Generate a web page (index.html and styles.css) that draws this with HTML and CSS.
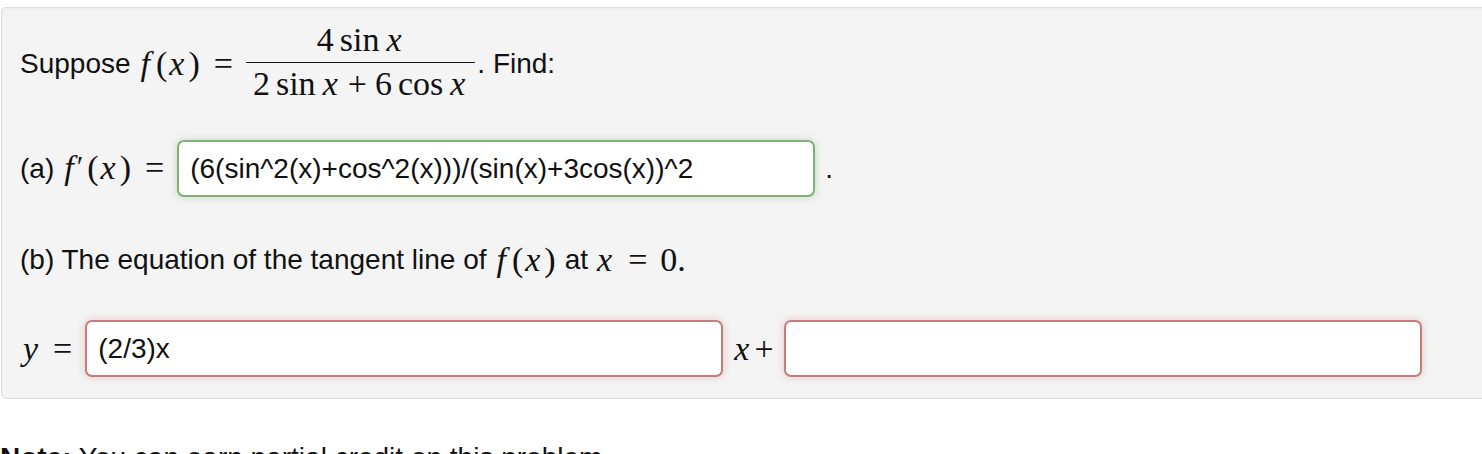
FILE: index.html
```html
<!DOCTYPE html>
<html>
<head>
<meta charset="utf-8">
<link rel="stylesheet" href="styles.css">
</head>
<body>
<div class="panel">
  <div class="row r1">
    <span class="text">Suppose</span>
    <span class="math sp-l"><i class="mf">f</i><span class="p">(</span><i class="mx">x</i><span class="p">)</span><span class="rel">=</span></span>
    <span class="frac">
      <span class="num">4<span class="op">sin</span><i class="mx">x</i></span>
      <span class="rule"></span>
      <span class="den">2<span class="op">sin</span><i class="mx">x</i><span class="bin">+</span>6<span class="op">cos</span><i class="mx">x</i></span>
    </span>
    <span class="text">. Find:</span>
  </div>

  <div class="row r2">
    <span class="text">(a)</span>
    <span class="math sp-l"><i class="mf">f</i><span class="prime">′</span><span class="p">(</span><i class="mx">x</i><span class="p">)</span><span class="rel">=</span></span>
    <div class="answer ok">(6(sin^2(x)+cos^2(x)))/(sin(x)+3cos(x))^2</div>
    <span class="text dot">.</span>
  </div>

  <div class="row r3">
    <span class="text">(b) The equation of the tangent line of</span>
    <span class="math sp-l"><i class="mf">f</i><span class="p">(</span><i class="mx">x</i><span class="p">)</span></span>
    <span class="text sp-l">at</span>
    <span class="math sp-l"><i class="mx">x</i><span class="rel">=</span>0.</span>
  </div>

  <div class="row r4">
    <span class="math"><i class="my">y</i><span class="rel">=</span></span>
    <div class="answer bad">(2/3)x</div>
    <span class="math xplus"><i class="mx">x</i><span class="plus">+</span></span>
    <div class="answer bad"></div>
  </div>
</div>
<p class="note"><b>Note:</b> You can earn partial credit on this problem.</p>
</body>
</html>
```

FILE: styles.css
```css
html, body {
  margin: 0;
  padding: 0;
  overflow: hidden;
  background: #ffffff;
}

body {
  font-family: "Liberation Sans", Arial, sans-serif;
  font-size: 28px;
  color: #111;
  width: 1482px;
  height: 454px;
}

.panel {
  margin-top: 7px;
  margin-left: 1px;
  margin-right: -30px;
  background: #f4f4f4;
  border: 1px solid #dedede;
  border-radius: 5px;
  box-shadow: inset 0 2px 3px rgba(0, 0, 0, 0.03);
  padding: 0 0 21px 18px;
}

.row {
  display: flex;
  align-items: center;
  white-space: nowrap;
}

.text {
  line-height: 34px;
}

.sp-l {
  margin-left: 8px;
}

.math {
  font-family: "Liberation Serif", "DejaVu Serif", serif;
  font-size: 34px;
  line-height: 34px;
  display: inline-flex;
  align-items: baseline;
}

.math i, .frac i {
  font-style: italic;
}

.mf {
  padding: 0 5px 0 2px;
}

.mx {
  padding: 0 3px 0 1px;
}

.my {
  padding: 0 2px 0 1px;
}

.p {
  padding: 0 1px;
}

.rel {
  margin: 0 13px 0 13px;
}

.bin {
  margin: 0 8px 0 7px;
}

.op {
  margin: 0 6px;
}

.prime {
  font-family: "Liberation Serif", "DejaVu Serif", serif;
  font-size: 30px;
  margin-left: -2px;
  margin-right: 3px;
  position: relative;
  top: -3px;
}

.r1 {
  height: 74px;
  margin-top: 19px;
}

.frac {
  display: inline-flex;
  flex-direction: column;
  align-items: stretch;
  font-family: "Liberation Serif", "DejaVu Serif", serif;
  font-size: 34px;
  margin-left: 0;
  margin-right: 2px;
  position: relative;
  top: -2px;
}

.num, .den {
  text-align: center;
  line-height: 34px;
  padding: 0 7px;
}

.num {
  padding-bottom: 5px;
}

.den {
  padding-top: 4px;
}

.rule {
  display: block;
  height: 1.5px;
  background: #111;
}

.r2 {
  margin-top: 39px;
  height: 57px;
}

.answer {
  box-sizing: border-box;
  width: 638px;
  height: 57px;
  background: #fff;
  border: 2px solid #7faf76;
  border-radius: 7px;
  padding: 0 11px;
  display: flex;
  align-items: center;
  font-size: 28px;
  color: #111;
}

.answer.ok {
  border-color: #80b078;
  box-shadow: 0 0 8px rgba(110, 160, 100, 0.35);
}

.answer.bad {
  border-color: #c87b7b;
  box-shadow: 0 0 9px rgba(200, 110, 110, 0.35);
}

.dot {
  margin-left: 10px;
}

.r3 {
  margin-top: 46px;
  height: 34px;
}

.r4 {
  margin-top: 43px;
  height: 57px;
}

.r4 .math:first-child {
  margin-left: 2px;
}

.xplus {
  margin: 0 8px 0 10px;
}

.plus {
  padding: 0 2px;
}

.note {
  margin: 42px 0 0 0;
  font-size: 28px;
  line-height: 34px;
}
```
